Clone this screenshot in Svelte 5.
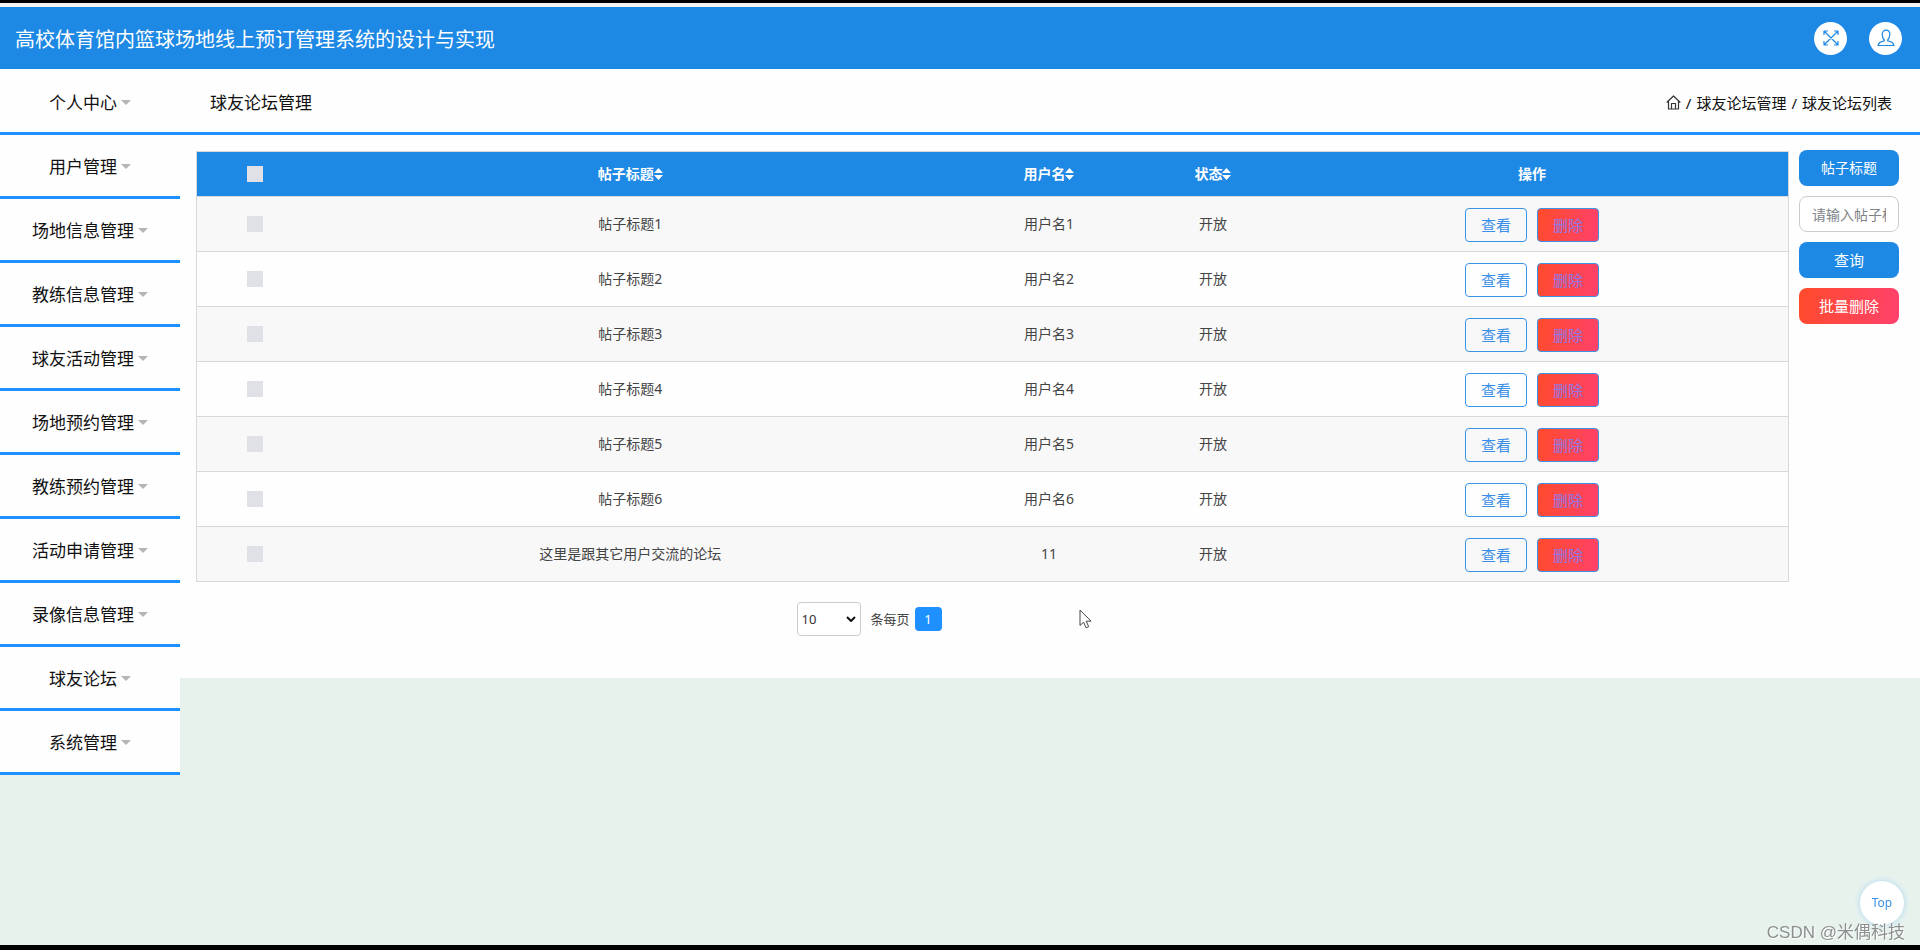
<script lang="ts">
  const menu = [
    '个人中心',
    '用户管理',
    '场地信息管理',
    '教练信息管理',
    '球友活动管理',
    '场地预约管理',
    '教练预约管理',
    '活动申请管理',
    '录像信息管理',
    '球友论坛',
    '系统管理'
  ];

  let posts = $state([
    { title: '帖子标题1', user: '用户名1', status: '开放', checked: false },
    { title: '帖子标题2', user: '用户名2', status: '开放', checked: false },
    { title: '帖子标题3', user: '用户名3', status: '开放', checked: false },
    { title: '帖子标题4', user: '用户名4', status: '开放', checked: false },
    { title: '帖子标题5', user: '用户名5', status: '开放', checked: false },
    { title: '帖子标题6', user: '用户名6', status: '开放', checked: false },
    { title: '这里是跟其它用户交流的论坛', user: '11', status: '开放', checked: false }
  ]);

  let keyword = $state('');
  let pageSize = $state('10');

  function toggleAll(event: Event) {
    const checked = (event.target as HTMLInputElement).checked;
    posts.forEach((post) => (post.checked = checked));
  }

  function remove(index: number) {
    posts.splice(index, 1);
  }

  function removeChecked() {
    posts = posts.filter((post) => !post.checked);
  }
</script>

{#snippet sortIcon()}
  <svg class="sort" viewBox="0 0 9 12" width="9" height="12" aria-hidden="true">
    <path d="M4.5 0 9 5H0zM0 7h9l-4.500 5z" fill="currentColor" />
  </svg>
{/snippet}

<div class="page">
  <header class="topbar">
    <h1>高校体育馆内篮球场地线上预订管理系统的设计与实现</h1>
    <div class="tools">
      <button class="round" aria-label="全屏">
        <svg viewBox="0 0 16 16" width="16" height="16">
          <path d="M1 1l14 14M15 1L1 15M1 5V1h4M11 1h4v4M15 11v4h-4M5 15H1v-4" />
        </svg>
      </button>
      <button class="round" aria-label="用户">
        <svg viewBox="0 0 18 18" width="18" height="18">
          <path d="M7.300 11C5.800 9.300 5.200 7.500 5.200 5.200 5.200 2.800 6.700 1.200 9 1.200s3.800 1.600 3.800 4c0 2.300-.6 4.100-2.100 5.800v.8c3 .5 5.800 1.500 6.300 4.700H1c.5-3.200 3.300-4.200 6.300-4.700z" />
        </svg>
      </button>
    </div>
  </header>

  <div class="body">
    <nav class="sidebar">
      {#each menu as item}
        <a href="#menu">{item}<span class="caret"></span></a>
      {/each}
    </nav>

    <main>
      <div class="crumbs">
        <h2>球友论坛管理</h2>
        <div class="path">
          <a href="#home" aria-label="首页">
            <svg viewBox="0 0 15 15" width="15" height="15">
              <path d="M.7 7.500 7.500 1l6.800 6.500M2.500 6v8h10V6M5.500 14V8.500h4V14" />
            </svg>
          </a>
          <span>/</span>
          <span>球友论坛管理</span>
          <span>/</span>
          <span>球友论坛列表</span>
        </div>
      </div>

      <div class="content">
        <div class="list">
          <table>
            <colgroup>
              <col class="col-check" />
              <col class="col-title" />
              <col class="col-user" />
              <col class="col-status" />
              <col />
            </colgroup>
            <thead>
              <tr>
                <th><input type="checkbox" aria-label="全选" onchange={toggleAll} /></th>
                <th>帖子标题{@render sortIcon()}</th>
                <th>用户名{@render sortIcon()}</th>
                <th>状态{@render sortIcon()}</th>
                <th>操作</th>
              </tr>
            </thead>
            <tbody>
              {#each posts as post, i}
                <tr>
                  <td><input type="checkbox" aria-label={post.title} bind:checked={post.checked} /></td>
                  <td>{post.title}</td>
                  <td>{post.user}</td>
                  <td>{post.status}</td>
                  <td>
                    <div class="actions">
                      <button class="view">查看</button>
                      <button class="delete" onclick={() => remove(i)}>删除</button>
                    </div>
                  </td>
                </tr>
              {/each}
            </tbody>
          </table>

          <div class="pager">
            <div class="select">
              <select id="page-size" bind:value={pageSize}>
                <option>10</option>
                <option>25</option>
                <option>50</option>
              </select>
              <svg viewBox="0 0 10 7" width="10" height="7" aria-hidden="true">
                <path d="M1 1l4 4 4-4" />
              </svg>
            </div>
            <label for="page-size">条每页</label>
            <button class="current">1</button>
          </div>
        </div>

        <div class="search">
          <label class="btn" for="keyword">帖子标题</label>
          <input id="keyword" type="text" placeholder="请输入帖子标题" bind:value={keyword} />
          <button class="btn">查询</button>
          <button class="btn danger" onclick={removeChecked}>批量删除</button>
        </div>
      </div>
    </main>
  </div>

  <button class="to-top" onclick={() => window.scrollTo(0, 0)}>Top</button>
  <div class="watermark">CSDN @米偶科技</div>
  <svg class="cursor" viewBox="0 0 13 20" width="13" height="20" aria-hidden="true">
    <path d="M1 1v15.500l3.600-3.300 2.500 5.600 2.600-1.100-2.500-5.500H12z" />
  </svg>
</div>

<style>
  :global(body) {
    margin: 0;
  }

  .page {
    box-sizing: border-box;
    min-height: 100vh;
    border-top: 3px solid #000;
    border-bottom: 5px solid #000;
    background: #e8f2ed;
    color: #111;
    font-family: "Noto Sans", "Noto Sans CJK SC", sans-serif;
    font-size: 14px;
    line-height: 20px;
  }

  button,
  input,
  select {
    box-sizing: border-box;
    margin: 0;
    font: inherit;
  }

  button {
    padding: 0;
    border: none;
    cursor: pointer;
  }

  a {
    color: inherit;
    text-decoration: none;
  }

  svg path {
    stroke-linejoin: round;
  }

  .topbar {
    display: flex;
    align-items: center;
    justify-content: space-between;
    height: 62px;
    padding: 0 18px 0 15px;
    border-top: 4px solid #f4f4f4;
    background: #1e88e5;
  }

  h1 {
    margin: 0;
    padding-top: 4px;
    color: #fff;
    font-size: 20px;
    font-weight: 400;
    line-height: 28px;
  }

  .tools {
    display: flex;
    gap: 22px;
  }

  .round {
    display: flex;
    align-items: center;
    justify-content: center;
    width: 33px;
    height: 33px;
    border-radius: 50%;
    background: #fff;
  }

  .round path {
    fill: none;
    stroke: #1e88e5;
    stroke-width: 1.2;
  }

  .body {
    display: flex;
    align-items: flex-start;
  }

  .sidebar {
    flex: none;
    width: 180px;
    padding-top: 2px;
    background: #fefefe;
  }

  .sidebar a {
    box-sizing: border-box;
    display: flex;
    align-items: center;
    justify-content: center;
    gap: 4px;
    height: 64px;
    padding-top: 2px;
    border-bottom: 3px solid #1e90ff;
    font-size: 17px;
  }

  .caret {
    border: 5px solid transparent;
    border-top-color: #b5b5b5;
    border-bottom: none;
  }

  main {
    flex: 1;
    min-width: 0;
    background: #fefefe;
  }

  .crumbs {
    box-sizing: border-box;
    display: flex;
    align-items: center;
    justify-content: space-between;
    height: 66px;
    padding: 4px 28px 0 30px;
    border-bottom: 3px solid #1e90ff;
  }

  h2 {
    margin: 0;
    font-size: 17px;
    font-weight: 400;
  }

  .path {
    display: flex;
    align-items: center;
    gap: 5px;
    font-size: 15px;
  }

  .path svg {
    display: block;
  }

  .path path {
    fill: none;
    stroke: #333;
    stroke-width: 1.2;
  }

  .content {
    display: flex;
    align-items: flex-start;
    gap: 10px;
    padding: 15px 21px 42px 16px;
  }

  .list {
    flex: 1;
    min-width: 0;
    padding-top: 1px;
  }

  table {
    width: 100%;
    border: 1px solid #d6d8da;
    border-collapse: collapse;
    table-layout: fixed;
  }

  .col-check {
    width: 7.3%;
  }

  .col-title {
    width: 39.9%;
  }

  .col-user {
    width: 12.7%;
  }

  .col-status {
    width: 7.9%;
  }

  th,
  td {
    padding: 0;
    text-align: center;
  }

  th {
    height: 44px;
    background: #1e88e5;
    color: #fff;
    font-weight: 700;
  }

  td {
    height: 54px;
    border-top: 1px solid #d6d8da;
    color: #444;
  }

  tbody tr:nth-child(odd) {
    background: #f8f8f9;
  }

  .sort {
    vertical-align: -1px;
  }

  input[type='checkbox'] {
    display: block;
    width: 16px;
    height: 16px;
    margin: 0 auto;
    appearance: none;
    background: #dfe1e6;
  }

  input[type='checkbox']:checked {
    background: #1e90ff;
  }

  .actions {
    display: flex;
    justify-content: center;
    gap: 10px;
    padding-top: 2px;
  }

  .actions button {
    width: 62px;
    height: 34px;
    border: 1px solid #3a94e4;
    border-radius: 4px;
    background: transparent;
    color: #3a8ee6;
    font-size: 15px;
  }

  .actions .delete {
    background: linear-gradient(100deg, #ff4b2b, #ff416c) border-box;
    color: #8f78e6;
  }

  .pager {
    display: flex;
    align-items: center;
    padding: 20px 0 0 37.7%;
    color: #444;
    font-size: 13px;
  }

  .select {
    position: relative;
    margin-right: 10px;
  }

  select {
    display: block;
    width: 64px;
    height: 34px;
    padding: 0 4px;
    border: 1px solid #ccc;
    border-radius: 4px;
    appearance: none;
    background: #fff;
    color: #333;
  }

  .select svg {
    position: absolute;
    top: 14px;
    right: 5px;
    pointer-events: none;
  }

  .select path {
    fill: none;
    stroke: #111;
    stroke-width: 2;
  }

  .current {
    width: 27px;
    height: 24px;
    margin-left: 5px;
    border-radius: 4px;
    background: #1e90ff;
    color: #fff;
  }

  .search {
    display: flex;
    flex: none;
    flex-direction: column;
    gap: 10px;
    width: 100px;
  }

  .search input,
  .btn {
    box-sizing: border-box;
    width: 100%;
    height: 36px;
    border-radius: 8px;
  }

  .search input {
    padding: 0 12px;
    border: 1px solid #ccc;
    background: #fff;
    color: #444;
  }

  .search input::placeholder {
    color: #808488;
  }

  .btn {
    background: #1e88e5;
    color: #fff;
    line-height: 36px;
    text-align: center;
  }

  .search button {
    font-size: 15px;
  }

  .danger {
    background: linear-gradient(100deg, #ff4b2b, #ff416c);
  }

  .to-top {
    position: fixed;
    right: 16px;
    bottom: 25px;
    width: 44px;
    height: 44px;
    border-radius: 50%;
    background: #fff;
    box-shadow: 0 0 6px #a9d5f2;
    color: #3a8ee6;
    font-size: 12px;
  }

  .watermark {
    position: fixed;
    right: 15px;
    bottom: 5px;
    color: #8b8f8d;
    font-family: "Liberation Sans", "Noto Sans CJK SC", sans-serif;
    font-size: 17px;
    line-height: 24px;
    text-shadow: 1px 1px 0 #fff;
  }

  .cursor {
    position: fixed;
    top: 609px;
    left: 1079px;
    pointer-events: none;
  }

  .cursor path {
    fill: #fff;
    stroke: #444;
    stroke-width: 1;
  }
</style>
